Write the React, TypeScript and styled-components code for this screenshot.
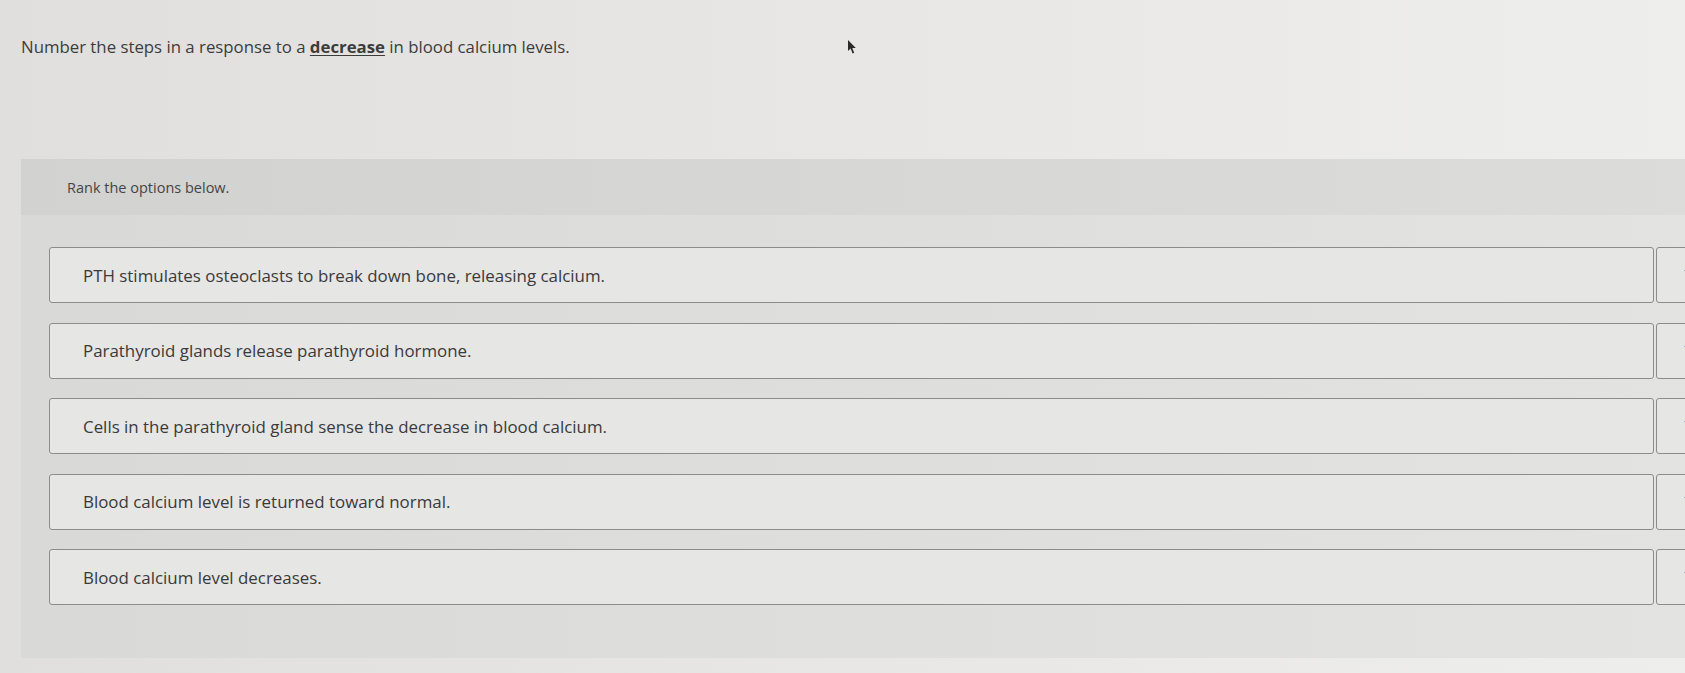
import React from "react";
import styled, { createGlobalStyle } from "styled-components";

const GlobalStyle = createGlobalStyle`
  html, body {
    margin: 0;
    padding: 0;
    overflow: hidden;
  }
  body {
    background: linear-gradient(90deg, #e0dfdd 0%, #e7e6e4 45%, #eeeeec 100%);
    font-family: "Open Sans", "Liberation Sans", Arial, sans-serif;
    color: #3a3a3a;
  }
`;

const Page = styled.div`
  position: relative;
  width: 100%;
  height: 673px;
  padding: 36px 0 0 21px;
  box-sizing: border-box;
`;

const Prompt = styled.p`
  margin: 0;
  font-size: 16.8px;
  line-height: 22px;
  color: #3c3c3c;
`;

const Emphasis = styled.span`
  font-weight: 700;
  text-decoration: underline;
  text-underline-offset: 2px;
`;

const Panel = styled.section`
  margin-top: 101px;
  width: calc(100% + 40px);
  background: linear-gradient(90deg, #d9d9d8 0%, #dfdfde 60%, #e3e3e2 100%);
`;

const PanelHeader = styled.div`
  display: flex;
  align-items: center;
  height: 56px;
  padding-left: 46px;
  background: linear-gradient(90deg, #d2d2d1 0%, #d8d8d7 60%, #dcdcdb 100%);
  font-size: 14.5px;
  color: #454545;
`;

const OptionList = styled.ol`
  list-style: none;
  margin: 0;
  padding: 32px 0 53px 28px;
  display: flex;
  flex-direction: column;
  gap: 19.5px;
`;

const OptionRow = styled.li`
  display: flex;
  gap: 2px;
  height: 56px;
`;

const OptionBox = styled.div`
  flex: 1;
  display: flex;
  align-items: center;
  padding-left: 33px;
  border: 1.5px solid #8c8c8c;
  border-radius: 3px;
  background: #e6e6e5;
  font-size: 16.9px;
  color: #3a3a3a;
`;

const RankBox = styled.div`
  width: 69px;
  flex: none;
  display: flex;
  align-items: center;
  padding: 0 0 6px 27px;
  box-sizing: border-box;
  border: 1.5px solid #8c8c8c;
  border-radius: 3px;
  background: #e6e6e5;
`;

const Caret = styled.span`
  display: block;
  width: 0;
  height: 0;
  border-left: 4px solid transparent;
  border-right: 4px solid transparent;
  border-top: 4px solid #4d6d8c;
`;

const Cursor = styled.svg`
  position: absolute;
  left: 847px;
  top: 39px;
  width: 10px;
  height: 16px;
`;

const options = [
  "PTH stimulates osteoclasts to break down bone, releasing calcium.",
  "Parathyroid glands release parathyroid hormone.",
  "Cells in the parathyroid gland sense the decrease in blood calcium.",
  "Blood calcium level is returned toward normal.",
  "Blood calcium level decreases.",
];

const App = () => {
  return (
    <>
      <GlobalStyle />
      <Page>
        <Prompt>
          Number the steps in a response to a <Emphasis>decrease</Emphasis> in
          blood calcium levels.
        </Prompt>

        {/* pointer over the prompt */}
        <Cursor viewBox="0 0 10 16">
          <path d="M1 1 L1 12 L3.6 9.6 L5.6 14.5 L7.2 13.8 L5.3 9 L8.8 9 Z" fill="#2a2a2a" />
        </Cursor>

        <Panel>
          <PanelHeader>Rank the options below.</PanelHeader>
          <OptionList>
            {options.map((text) => (
              <OptionRow key={text}>
                <OptionBox>{text}</OptionBox>
                <RankBox>
                  <Caret />
                </RankBox>
              </OptionRow>
            ))}
          </OptionList>
        </Panel>
      </Page>
    </>
  );
};

export default App;
